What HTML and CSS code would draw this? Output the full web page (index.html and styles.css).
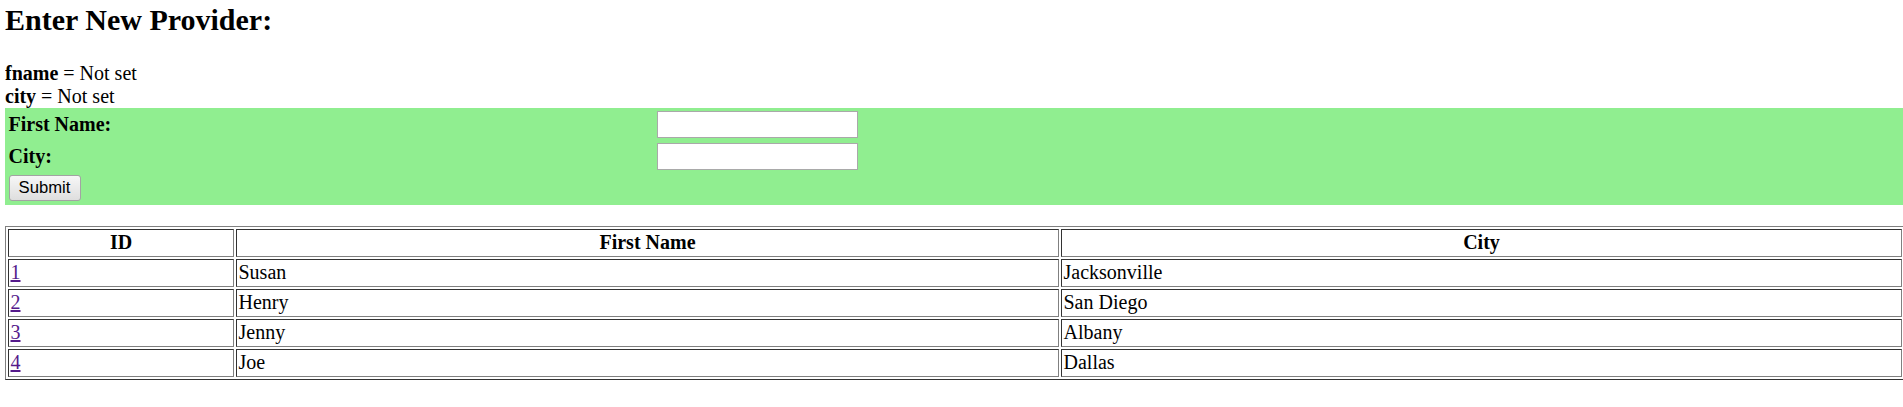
FILE: index.html
```html
<!DOCTYPE html>
<html>
<head>
<meta charset="utf-8">
<title>Enter New Provider</title>
<link rel="stylesheet" href="styles.css">
</head>
<body>
<h2 class="title">Enter New Provider:</h2>
<div class="status"><b>fname</b> = Not set<br><b>city</b> = Not set</div>
<form class="entry">
  <table class="form-table">
    <tr>
      <td class="label">First Name:</td>
      <td class="field"><input class="text-input" type="text" name="fname"></td>
    </tr>
    <tr>
      <td class="label">City:</td>
      <td class="field"><input class="text-input" type="text" name="city"></td>
    </tr>
    <tr>
      <td class="label"><button class="submit" type="button">Submit</button></td>
      <td class="field"></td>
    </tr>
  </table>
</form>
<table class="data">
  <tr>
    <th class="col-id">ID</th>
    <th class="col-name">First Name</th>
    <th class="col-city">City</th>
  </tr>
  <tr><td><a class="id-link" href="#1">1</a></td><td>Susan</td><td>Jacksonville</td></tr>
  <tr><td><a class="id-link" href="#2">2</a></td><td>Henry</td><td>San Diego</td></tr>
  <tr><td><a class="id-link" href="#3">3</a></td><td>Jenny</td><td>Albany</td></tr>
  <tr><td><a class="id-link" href="#4">4</a></td><td>Joe</td><td>Dallas</td></tr>
</table>
</body>
</html>
```
FILE: styles.css
```css
html {
  overflow: hidden;
}
body {
  margin: 0 0 0 5px;
  font-family: "Liberation Serif", "Times New Roman", serif;
  font-size: 20px;
  color: #000;
  background: #fff;
  width: 1900px;
}
.title {
  font-size: 30px;
  font-weight: bold;
  margin: 3px 0 24.5px 0;
}
.status {
  line-height: normal;
}
.entry {
  margin: 0 0 21px 0;
}
.form-table {
  width: 1900px;
  background: #90ee90;
  border-spacing: 2px;
  border-collapse: separate;
}
.form-table td {
  padding: 1.5px;
  vertical-align: middle;
}
.label {
  width: 643px;
  font-weight: bold;
  text-align: left;
}
.text-input {
  display: block;
  box-sizing: border-box;
  width: 201px;
  height: 27px;
  margin: 0;
  padding: 1px 2px;
  border: 1px solid #a9a9a9;
  background: #fff;
  font-family: "Liberation Sans", Arial, sans-serif;
  font-size: 16.67px;
}
.submit {
  display: block;
  box-sizing: border-box;
  width: 72px;
  height: 26px;
  margin: 0;
  padding: 0;
  border: 1px solid #a3a3a3;
  border-radius: 3px;
  background: linear-gradient(#f7f7f7, #dedede);
  font-family: "Liberation Sans", Arial, sans-serif;
  font-size: 16.67px;
  color: #000;
}
.data {
  width: 1900px;
  border-collapse: separate;
  border-spacing: 2px;
  border: 1px solid;
  border-color: #808080 #333 #333 #808080;
}
.data th,
.data td {
  padding: 1.5px;
  border: 1px solid;
  border-color: #333 #808080 #808080 #333;
}
.data td {
  text-align: left;
}
.data th {
  font-weight: bold;
  text-align: center;
}
.col-id {
  width: 221px;
}
.col-name {
  width: 818px;
}
.id-link {
  color: #551a8b;
  text-decoration: underline;
}
```
